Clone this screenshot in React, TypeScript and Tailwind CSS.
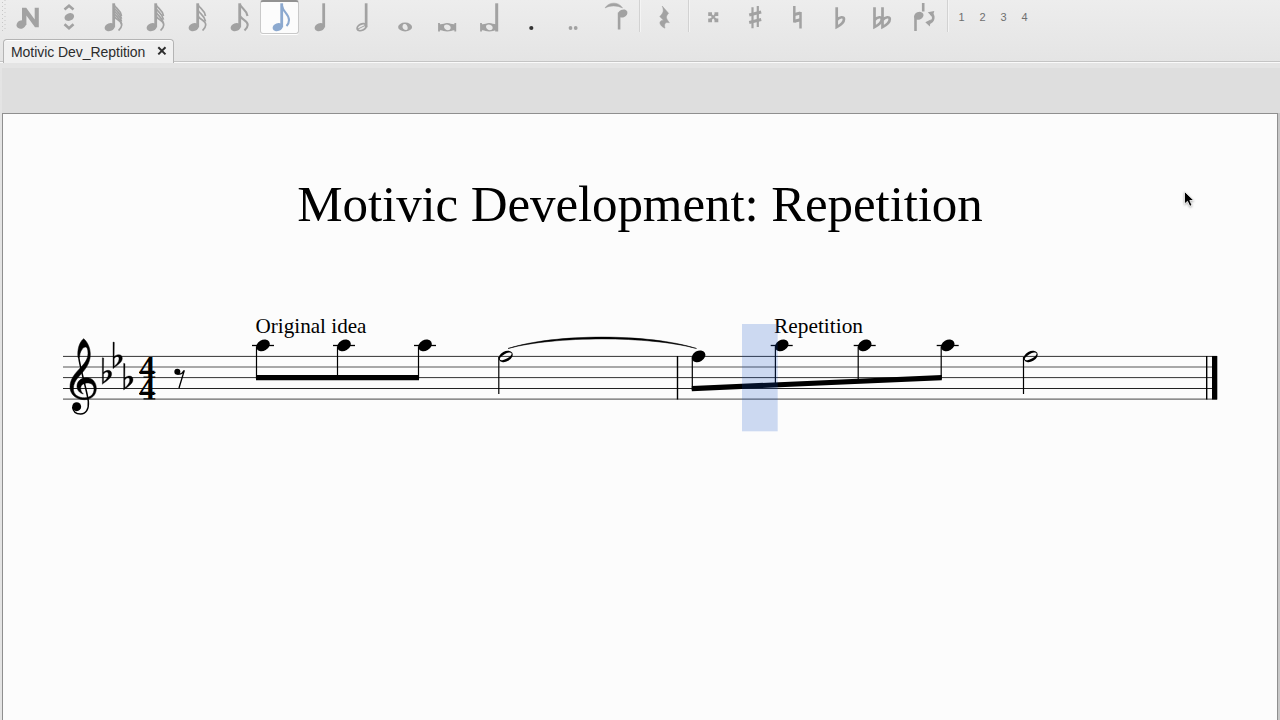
import React from "react";

type IconProps = { children: React.ReactNode; active?: boolean };

const Tool: React.FC<IconProps> = ({ children, active }) => (
  <button
    type="button"
    className={
      active
        ? "relative h-9 w-[42px] shrink-0 text-[#8ca9cf]"
        : "relative h-9 w-[42px] shrink-0 text-[#a2a2a2]"
    }
  >
    {active && (
      <span className="absolute top-0 left-px h-[34px] w-[39px] rounded-[3px] border border-t-2 border-[#c9c9c9] border-t-[#929292] bg-[#fcfcfc] shadow-[0_1px_0_#fff]" />
    )}
    <svg viewBox="0 0 42 36" className="relative block h-9 w-[42px]" fill="currentColor">
      {children}
    </svg>
  </button>
);

const Separator: React.FC<{ className: string }> = ({ className }) => (
  <div className={`flex h-8 shrink-0 justify-center ${className}`}>
    <div className="w-px bg-[#d2d2d2]" />
    <div className="w-px bg-[#f4f4f4]" />
  </div>
);

const SolidNote = ({ flags = 0 }: { flags?: number }) => (
  <>
    <ellipse cx="18.7" cy="27.2" rx="5.2" ry="3.9" transform="rotate(-20 18.7 27.2)" />
    <rect x="21.300" y="3.300" width="2.8" height="24" />
    {flags > 0 && (
      <g fill="none" stroke="currentColor" strokeWidth={flags > 2 ? 1.7 : 2.1}>
        {Array.from({ length: flags }, (_, i) => (
          <path
            key={i}
            d={
              i === flags - 1
                ? flags === 1
                  ? "M23 6C24 12 30 14 30 20C30 23 28.5 25 27.5 26"
                  : "M23 16C25 20 31 20.500 30.700 25C30.500 28 28.500 29.500 27.500 30.5"
                : "M23 4.500C24.500 8.500 29.500 9.500 30.500 16"
            }
            transform={
              i === flags - 1
                ? undefined
                : `translate(0 ${(i * 11) / Math.max(flags - 1, 1)})`
            }
          />
        ))}
      </g>
    )}
  </>
);

const FlatShape = () => (
  <path
    fillRule="evenodd"
    stroke="#000"
    strokeWidth="1"
    d="M0 0L4 1L3.4 44C8 39.500 13 38 18 38C24 38 28 42 28 49C28 62 12 70 0 80ZM3.500 50L3.800 73C9 69 18 60 18 50C18 41 9 41 3.500 50Z"
  />
);

const ToolFlat = ({ x }: { x: number }) => (
  <path
    d={`M${x} 7.200V27C${x + 4} 25 ${x + 7.300} 22 ${x + 7.300} 19C${x + 7.300} 16.500 ${x + 3} 16.500 ${x} 20`}
    fill="none"
    stroke="currentColor"
    strokeWidth="2.700"
  />
);

const Toolbar: React.FC = () => (
  <div className="relative flex h-[39px] w-full items-start pl-[7px]">
    <svg className="absolute top-0 left-0 h-9 w-[7px]" fill="#c6c6c6">
      {[2, 6, 10, 14, 18, 22, 26, 30].map((y) => (
        <g key={y}>
          <rect x="2" y={y} width="1" height="1" />
          <rect x="4.500" y={y - 2} width="1" height="1" />
        </g>
      ))}
    </svg>
    <Tool>
      <ellipse cx="14.300" cy="24.500" rx="5" ry="4" transform="rotate(-25 14.300 24.500)" />
      <path d="M15 7.800H19.200L27.700 19.500V7.800H31.800V27.300H28L19.400 15.500V25H15Z" />
    </Tool>
    <Tool>
      <ellipse cx="20.300" cy="17" rx="5" ry="3.700" transform="rotate(-25 20.300 17)" />
      <path
        d="M15.500 9.500L20 5.800L24.500 9.500M15.500 24.300L20 28.200L24.500 24.300"
        fill="none"
        stroke="currentColor"
        strokeWidth="2.600"
      />
    </Tool>
    <Tool><SolidNote flags={5} /></Tool>
    <Tool><SolidNote flags={4} /></Tool>
    <Tool><SolidNote flags={3} /></Tool>
    <Tool><SolidNote flags={2} /></Tool>
    <Tool active><SolidNote flags={1} /></Tool>
    <Tool><SolidNote /></Tool>
    <Tool>
      <ellipse cx="18.700" cy="27.200" rx="4.800" ry="3.100" transform="rotate(-25 18.700 27.200)" fill="none" stroke="currentColor" strokeWidth="1.900" />
      <path d="M15 29L22 25.500" stroke="currentColor" strokeWidth="1" />
      <rect x="21.800" y="3.300" width="2.700" height="24" />
    </Tool>
    <Tool>
      <path fillRule="evenodd" d="M13.100 27A7 4.400 0 1 0 27.100 27A7 4.400 0 1 0 13.100 27ZM17.700 25.500C18.500 23.500 21 23.500 22.200 26C23.300 28.500 22.500 30.300 20.800 30C18.500 29.800 17 27.500 17.700 25.500Z" />
    </Tool>
    <Tool>
      <path d="M12 23V31.500M28.300 23V31.500" stroke="currentColor" strokeWidth="1.800" />
      <path fillRule="evenodd" d="M12 24C15 25 17 23 20.200 23S26 25 28.500 24V30.500C26 29.500 24 31.500 20.200 31.500S15 29.500 12 30.500ZM17 27C17.500 30.500 23 31.500 23.700 28C24 24.500 17 23 17 27Z" />
    </Tool>
    <Tool>
      <path d="M12 23V31.500" stroke="currentColor" strokeWidth="1.800" />
      <path d="M27.700 3.300V31.500" stroke="currentColor" strokeWidth="3" />
      <path fillRule="evenodd" d="M12 24C15 25 17 23 20.200 23S26 25 28.500 24V30.500C26 29.500 24 31.500 20.200 31.500S15 29.500 12 30.500ZM17 27C17.500 30.500 23 31.500 23.700 28C24 24.500 17 23 17 27Z" />
    </Tool>
    <Tool>
      <circle cx="20.300" cy="28" r="2.100" fill="#333" />
    </Tool>
    <Tool>
      <circle cx="17.500" cy="28" r="1.900" />
      <circle cx="22.700" cy="28" r="1.900" />
    </Tool>
    <Tool>
      <path d="M10 8C13.500 1.500 24 1.500 27.500 8C22 5.200 15 5.200 10 8Z" stroke="currentColor" strokeWidth="0.500" />
      <ellipse cx="27.700" cy="13.500" rx="4.900" ry="3.800" transform="rotate(-25 27.700 13.500)" />
      <rect x="22.800" y="12.500" width="2.600" height="17" />
    </Tool>
    <Separator className="w-[6px]" />
    <Tool>
      <path d="M19.200 6L25.600 13.300C22.600 16.500 22.800 18 26.400 22.800C22.500 21.800 20.800 23.500 22 28.200C16 25.500 15 20.500 20.500 20.200L16.700 16.500C20.500 13 21 10.500 19.200 6Z" stroke="currentColor" strokeWidth="0.500" />
    </Tool>
    <Separator className="w-[7px]" />
    <Tool>
      <path d="M18 13.800L24.500 20.200M24.500 13.800L18 20.200" stroke="currentColor" strokeWidth="2" />
      <path d="M16.200 12.200H20V16H16.200ZM22.500 12.200H26.300V16H22.500ZM16.200 18.400H20V22.200H16.200ZM22.500 18.400H26.300V22.200H22.500Z" />
    </Tool>
    <Tool>
      <path d="M18.500 7.300V28.300M23.800 6V27" stroke="currentColor" strokeWidth="2.200" />
      <path d="M15.200 15L27.200 12M15.200 22.500L27.200 19.500" stroke="currentColor" strokeWidth="3" />
    </Tool>
    <Tool>
      <path d="M18.300 6V22.500M24.500 12V28.500" stroke="currentColor" strokeWidth="2.500" />
      <path d="M18.300 14.500L24.500 13M18.300 21.300L24.500 19.800" stroke="currentColor" strokeWidth="3.200" />
    </Tool>
    <Tool><ToolFlat x={18.7} /></Tool>
    <Tool>
      <ToolFlat x={14.500} />
      <ToolFlat x={22.500} />
    </Tool>
    <Tool>
      <ellipse cx="16.800" cy="15.800" rx="4.900" ry="3.800" transform="rotate(-25 16.800 15.800)" />
      <path d="M13.500 16V31M21.200 3V11.500" stroke="currentColor" strokeWidth="2.600" />
      <path d="M28.500 13.500C33 15.500 32 21.500 26.500 23" fill="none" stroke="currentColor" strokeWidth="2.500" />
      <path d="M25.800 12.300L32.300 11L30.500 17.300ZM23.300 22.200L28.800 19.500L27.800 26.500Z" />
    </Tool>
    <Separator className="w-[7px]" />
    {["1", "2", "3", "4"].map((voice) => (
      <button
        key={voice}
        type="button"
        className="h-[35px] w-[21px] shrink-0 font-['Liberation_Sans'] text-[11px] text-[#6f6f6f]"
      >
        {voice}
      </button>
    ))}
  </div>
);

const TabStrip: React.FC = () => (
  <div className="flex h-[24px] w-full items-end">
    <div className="h-[2px] w-[3px] border-t border-[#c4c4c4] bg-[#fafafa]" />
    <div className="flex h-[24px] w-[171px] items-center justify-between rounded-t-[4px] border border-b-0 border-[#b4b4b4] bg-[#f0f0f0] pr-[6px] pl-[7px] shadow-[inset_0_1px_0_#fff]">
      <span className="font-['Liberation_Sans'] text-[14px] leading-none tracking-[-0.05px] whitespace-nowrap text-[#2c2c2c]">
        Motivic Dev_Reptition
      </span>
      <svg viewBox="0 0 10 10" className="mb-[2px] h-[10px] w-[10px]">
        <path d="M1.300 1.200L8.500 8.400M8.500 1.200L1.300 8.400" stroke="#2e2e2e" strokeWidth="2" />
      </svg>
    </div>
    <div className="h-[2px] flex-1 border-t border-[#c4c4c4] bg-[#fafafa]" />
  </div>
);

const staffLines = [
  { y: 356.4, color: "#333" },
  { y: 367, color: "#555" },
  { y: 377.6, color: "#333" },
  { y: 388.5, color: "#222" },
  { y: 399.1, color: "#444" },
];

// ledger-line notes sit above the staff and carry their own short line
const notes = [
  { x: 263, y: 345.4, stem: 256.5, end: 379, ledger: true },
  { x: 344, y: 345.4, stem: 337.5, end: 379, ledger: true },
  { x: 425, y: 345.4, stem: 418.5, end: 379, ledger: true },
  { x: 698.6, y: 356.3, stem: 692.3, end: 390, ledger: false },
  { x: 781.7, y: 345.4, stem: 775.4, end: 385, ledger: true },
  { x: 864.7, y: 345.4, stem: 858.2, end: 382, ledger: true },
  { x: 947.7, y: 345.4, stem: 941.2, end: 379, ledger: true },
];

const halfNotes = [
  { x: 505.7, stem: 498.8 },
  { x: 1030.7, stem: 1023.5 },
];

const Score: React.FC = () => (
  <svg viewBox="3 300 1274 140" className="block h-[140px] w-[1274px]">
    <g strokeWidth="1">
      {staffLines.map((line) => (
        <line key={line.y} x1="63" x2="1217" y1={line.y} y2={line.y} stroke={line.color} />
      ))}
    </g>

    {/* clef, key signature and rest are drawn on a 3x grid */}
    <g transform="translate(50 325) scale(0.33333)">
      <path stroke="#000" strokeWidth="1.500" d="M101 41C112 50 121 68 121 88C121 116 104 136 88 153C77 165 70 177 70 191C70 209 85 218.500 104 218.500C122 218.500 132 207 132 193C132 180 124 174 113 174C100 174 92 181 92 190C92 198 95 202 100 207C88 204 81 195 81 184C81 168 94 158 110 158C127 158 139 172 139 190C139 211 124 224 103 224C78 224 60 208 60 186C60 165 71 150 86 134C103 116 114 104 114 85C114 73 111 66 107 66C98 66 89 81 89 96L84 98C81 72 89 50 101 41Z" />
      <path d="M86 95C90 130 112 200 115 229C117 253 108 267 92 267C78 267 69 259 68 246" fill="none" stroke="#000" strokeWidth="4.500" />
      <circle cx="80" cy="245" r="13.500" />
      <g transform="translate(157 98)"><FlatShape /></g>
      <g transform="translate(189 51)"><FlatShape /></g>
      <g transform="translate(221 115)"><FlatShape /></g>
      <circle cx="382" cy="140" r="9" />
      <path d="M380 145C391 151 397 146 403 136L387 189" fill="none" stroke="#000" strokeWidth="4" />
    </g>

    <g className="font-['Liberation_Serif'] font-bold" fontSize="31.500" textAnchor="middle">
      <text x="147" y="377.500">4</text>
      <text x="147" y="398.900">4</text>
    </g>
    <path d="M143.500 377.200H155.300M143.500 398.800H155.300M139 372.300H155.500M139 393.700H155.500" stroke="#000" strokeWidth="1.300" />

    {notes.map((note) => (
      <g key={note.x}>
        <ellipse cx={note.x} cy={note.y} rx="7.200" ry="5.400" transform={`rotate(-30 ${note.x} ${note.y})`} />
        {note.ledger && (
          <line x1={note.x - 11} x2={note.x + 11} y1="345.500" y2="345.500" stroke="#000" strokeWidth="1.300" />
        )}
        <line x1={note.stem} x2={note.stem} y1={note.y + 1} y2={note.end} stroke="#000" strokeWidth="1.200" />
      </g>
    ))}
    <path d="M256 375H419V380.200H256Z" />
    <path d="M691.800 386L941.800 375V380.200L691.800 391.200Z" />

    {halfNotes.map((note) => (
      <g key={note.x}>
        <g transform={`translate(${note.x} 356.400) rotate(-29)`}>
          <path fillRule="evenodd" d="M-7.500 0A7.500 5.100 0 1 0 7.500 0A7.500 5.100 0 1 0 -7.500 0ZM-6.600 0A6.600 2.500 0 1 0 6.600 0A6.600 2.500 0 1 0 -6.600 0Z" />
        </g>
        <line x1={note.stem} x2={note.stem} y1="357" y2="394" stroke="#000" strokeWidth="1.200" />
      </g>
    ))}

    <path d="M508 348.500C555 333.300 649 333.300 696.500 348.500C649 335.700 555 335.700 508 348.500Z" stroke="#000" strokeWidth="0.500" />

    <line x1="677.500" x2="677.500" y1="356" y2="399.500" stroke="#000" strokeWidth="1.400" />
    <line x1="1206.700" x2="1206.700" y1="356" y2="399.500" stroke="#000" strokeWidth="1.400" />
    <rect x="1212" y="356" width="5.300" height="43.500" />

    <g className="font-['Liberation_Serif']" fontSize="21.500">
      <text x="255.500" y="332.600" textLength="111" lengthAdjust="spacingAndGlyphs">Original idea</text>
      <text x="774" y="332.600" textLength="89" lengthAdjust="spacingAndGlyphs">Repetition</text>
    </g>

    <rect x="742" y="324" width="35.700" height="107.300" fill="#1050c8" fillOpacity="0.200" />
  </svg>
);

const App: React.FC = () => {
  return (
    <div className="relative flex h-[720px] w-[1280px] flex-col overflow-hidden bg-linear-to-b from-[#ededed] to-[#e4e4e4] to-[64px]">
      <Toolbar />
      <TabStrip />
      <div className="mt-[5px] ml-[2px] flex flex-1 flex-col bg-[#dedede] pt-[45px]">
        <div className="flex flex-1 bg-[#c8c8c8]">
          <main className="w-[1276px] border border-b-0 border-[#8f8f8f] bg-[#fcfcfc]">
            <h1 className="mt-[60px] h-[126px] text-center font-['Liberation_Serif'] text-[51px] leading-[60px] tracking-[-0.100px] whitespace-nowrap text-black">
              Motivic Development: Repetition
            </h1>
            <Score />
          </main>
        </div>
      </div>
      <svg viewBox="0 0 14 20" className="absolute top-[190px] left-[1183px] h-[20px] w-[14px] drop-shadow-[0_1px_1px_rgba(0,0,0,0.3)]">
        <path d="M1.500 1.500V14L4.500 11.300L6.800 16.300L9 15.300L6.800 10.500H10.800Z" stroke="#fff" strokeWidth="0.800" />
      </svg>
    </div>
  );
};

export default App;
